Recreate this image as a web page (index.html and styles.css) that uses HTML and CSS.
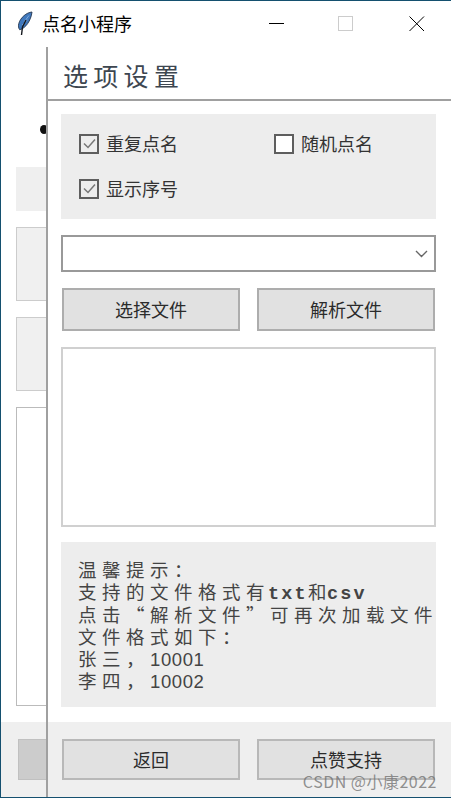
FILE: index.html
```html
<!DOCTYPE html>
<html lang="zh-CN">
<head>
<meta charset="utf-8">
<title>点名小程序</title>
<link rel="stylesheet" href="styles.css">
</head>
<body>
<div class="window">
  <header class="titlebar">
    <svg class="app-icon" width="16" height="25" viewBox="0 0 16 25">
      <path d="M15 1C9.500 1.500 3.500 6.500 1.800 12.500c-.6 2.400-.4 4.600.9 6.200C8.500 17.500 14 9.500 15 1z" fill="#3f78bd" stroke="#22344e" stroke-width=".9"/>
      <path d="M12 4.500 7 11M10.500 9 5 14" fill="none" stroke="#8fb4dd" stroke-width=".8"/>
      <path d="M9 9 5.500 16 4.500 24" fill="none" stroke="#15191f" stroke-width="1.400"/>
    </svg>
    <span class="app-title">点名小程序</span>
    <div class="controls">
      <svg class="ctl" width="16" height="16" viewBox="0 0 16 16"><path d="M0 7.500H15" stroke="#000" fill="none"/></svg>
      <svg class="ctl ctl-max" width="16" height="16" viewBox="0 0 16 16"><rect x=".5" y=".5" width="14" height="14" fill="none" stroke="#ccc"/></svg>
      <svg class="ctl" width="16" height="16" viewBox="0 0 16 16"><path d="M.5.500 15 15M15 .5.500 15" stroke="#000" fill="none"/></svg>
    </div>
  </header>

  <div class="back">
    <div class="back-main">
      <div class="dot-row"><span class="dot"></span></div>
      <div class="back-bar"></div>
      <div class="back-box"></div>
      <div class="back-box"></div>
      <div class="back-list"></div>
    </div>
    <div class="back-footer"><div class="back-btn"></div></div>
  </div>

  <section class="panel">
    <h1 class="panel-title">选项设置</h1>
    <div class="panel-body">
      <div class="options">
        <label class="opt"><span class="check on"><svg width="17" height="17" viewBox="0 0 17 17"><path d="M3 8.500 7 12.500 14 4.500" fill="none" stroke="#777" stroke-width="1.500"/></svg></span>重复点名</label>
        <label class="opt"><span class="check"></span>随机点名</label>
        <label class="opt"><span class="check on"><svg width="17" height="17" viewBox="0 0 17 17"><path d="M3 8.500 7 12.500 14 4.500" fill="none" stroke="#777" stroke-width="1.500"/></svg></span>显示序号</label>
      </div>
      <div class="select">
        <svg width="13" height="8" viewBox="0 0 13 8"><path d="M1 1 6.500 6.500 12 1" fill="none" stroke="#666" stroke-width="1.400"/></svg>
      </div>
      <div class="btn-row">
        <button class="btn">选择文件</button>
        <button class="btn">解析文件</button>
      </div>
      <div class="textarea"></div>
      <div class="tips">
        <div class="tip-line">温馨提示：</div>
        <div class="tip-line">支持的文件格式有<span class="latin">txt</span><span class="tight">和</span><span class="latin">csv</span></div>
        <div class="tip-line">点击“解析文件”可再次加载文件</div>
        <div class="tip-line">文件格式如下：</div>
        <div class="tip-line">张三，<span class="num">10001</span></div>
        <div class="tip-line">李四，<span class="num">10002</span></div>
      </div>
    </div>
    <div class="panel-footer">
      <button class="btn">返回</button>
      <button class="btn">点赞支持</button>
    </div>
  </section>

  <span class="watermark">CSDN @小康2022</span>
</div>
</body>
</html>
```
FILE: styles.css
```css
* { box-sizing: border-box; }
html, body { margin: 0; padding: 0; }
body {
  width: 451px;
  height: 798px;
  overflow: hidden;
  background: #fff;
  font-family: "Noto Sans CJK SC", "Liberation Sans", sans-serif;
  color: #333;
}
.window {
  position: relative;
  width: 451px;
  height: 798px;
  display: flex;
  flex-direction: column;
  border-top: 1px solid #14506f;
  border-left: 1px solid #14506f;
  border-bottom: 1px solid #14506f;
  overflow: hidden;
}
.titlebar {
  height: 46px;
  flex: none;
  display: flex;
  align-items: center;
  padding-left: 16px;
  background: #fff;
}
.app-icon { flex: none; margin-top: -2px; }
.app-title {
  margin-left: 9px;
  margin-top: -2px;
  font-size: 18px;
  line-height: 24px;
  color: #000;
}
.controls {
  margin-left: auto;
  margin-right: 26px;
  margin-top: -1px;
  display: flex;
  gap: 54px;
}
.ctl { display: block; }
.ctl-max { margin-left: -1px; margin-right: 1px; }
.back {
  flex: 1;
  display: flex;
  flex-direction: column;
}
.back-main {
  flex: 1;
  padding: 0 0 0 15px;
  display: flex;
  flex-direction: column;
}
.dot-row {
  height: 120px;
  padding-top: 78px;
  display: flex;
  justify-content: flex-end;
  width: 30px;
}
.dot {
  width: 8px;
  height: 9px;
  border-radius: 50%;
  background: #111;
  margin-right: -2px;
}
.back-bar {
  width: 40px;
  height: 44px;
  background: #efefef;
  margin-bottom: 16px;
}
.back-box {
  width: 40px;
  height: 74px;
  background: #f0f0f0;
  border: 1px solid #ccc;
  margin-bottom: 16px;
}
.back-list {
  width: 40px;
  height: 299px;
  background: #fff;
  border: 1px solid #bbb;
}
.back-footer {
  height: 75px;
  flex: none;
  background: #efefef;
  padding: 17px 0 0 17px;
}
.back-btn {
  width: 40px;
  height: 41px;
  background: #ccc;
  border: 1px solid #c0c0c0;
}
.panel {
  position: absolute;
  left: 45px;
  top: 46px;
  right: 0;
  bottom: 0;
  border-left: 2px solid #a0a0a0;
  display: flex;
  flex-direction: column;
  background: #fff;
}
.panel-title {
  margin: 0;
  height: 54px;
  flex: none;
  border-bottom: 2px solid #a0a0a0;
  padding: 11px 0 0 15px;
  font-size: 25px;
  line-height: 34px;
  font-weight: 400;
  letter-spacing: 5.300px;
  color: #3d4650;
}
.panel-body {
  flex: 1;
  padding: 13px 15px 0 13px;
  display: flex;
  flex-direction: column;
}
.options {
  height: 105px;
  background: #ededed;
  padding: 7px 0 0 15px;
  display: grid;
  grid-template-columns: 195px 1fr;
  grid-auto-rows: 45px;
  align-content: start;
  flex: none;
}
.opt {
  display: flex;
  align-items: center;
  padding-bottom: 2px;
  font-size: 18px;
  line-height: 24px;
  color: #333;
}
.check {
  width: 20px;
  height: 20px;
  border: 2px solid #5e5e5e;
  background: #fff;
  margin: 2px 7px 0 3px;
  flex: none;
}
.check.on { background: #ededed; }
.check svg { display: block; margin: -0.500px; }
.select {
  margin-top: 16px;
  height: 37px;
  border: 2px solid #999;
  background: #fff;
  display: flex;
  align-items: center;
  justify-content: flex-end;
  padding: 0 6px 0 0;
  flex: none;
}
.btn-row {
  margin: 16px 1px 0 1px;
  height: 43px;
  display: flex;
  justify-content: space-between;
  flex: none;
}
.btn {
  width: 178px;
  height: 43px;
  padding: 0 0 2px;
  background: #e1e1e1;
  border: 2px solid #adadad;
  font-family: inherit;
  font-size: 18px;
  line-height: 24px;
  color: #2b2b2b;
}
.textarea {
  margin-top: 16px;
  height: 180px;
  border: 2px solid #d0d0d0;
  background: #fff;
  flex: none;
}
.tips {
  margin-top: 15px;
  height: 165px;
  background: #ededed;
  padding: 16px 0 0 17px;
  font-size: 18.500px;
  letter-spacing: 5.500px;
  color: #444;
  white-space: nowrap;
  flex: none;
}
.tip-line { height: 22.300px; line-height: 22px; }
.latin { margin-left: -2px; letter-spacing: 2.200px; font-family: "Liberation Mono", monospace; font-weight: 700; }
.tight { letter-spacing: 2.500px; }
.num { letter-spacing: .6px; font-family: "Liberation Sans", sans-serif; }
.panel-footer {
  height: 75px;
  flex: none;
  background: #efefef;
  padding: 17px 16px 0 14px;
  display: flex;
  justify-content: space-between;
}
.panel-footer .btn { height: 41px; border-color: #b8b8b8; }
.watermark {
  position: absolute;
  right: 14px;
  bottom: 7px;
  font-size: 16px;
  line-height: 18px;
  color: rgba(110, 110, 110, .75);
  letter-spacing: .5px;
}
```
